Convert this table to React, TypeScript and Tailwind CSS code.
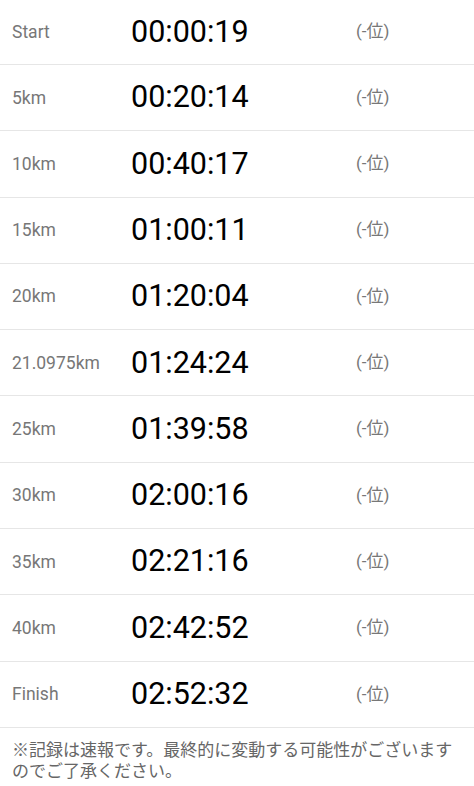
import React from 'react';

const splits = [
  { label: 'Start', time: '00:00:19' },
  { label: '5km', time: '00:20:14' },
  { label: '10km', time: '00:40:17' },
  { label: '15km', time: '01:00:11' },
  { label: '20km', time: '01:20:04' },
  { label: '21.0975km', time: '01:24:24' },
  { label: '25km', time: '01:39:58' },
  { label: '30km', time: '02:00:16' },
  { label: '35km', time: '02:21:16' },
  { label: '40km', time: '02:42:52' },
  { label: 'Finish', time: '02:52:32' },
];

export default function App() {
  return (
    <div className="w-[474px] h-[786px] bg-white overflow-hidden font-['Roboto','Noto_Sans_CJK_JP',sans-serif]">
      {splits.map((s, i) => (
        <div
          key={i}
          className={`flex items-center border-b border-[#e6e6e6] ${i === 0 ? 'h-[65px]' : 'h-[66.3px]'}`}
        >
          <span className="w-[131px] pl-3 text-[17.5px] text-[#777777] shrink-0">{s.label}</span>
          <span className="w-[225px] text-[30.5px] text-black leading-none shrink-0">{s.time}</span>
          <span className="text-[17px] text-[#777777]">(-位)</span>
        </div>
      ))}
      <p className="px-3 pt-[12px] text-[17px] leading-[21px] text-[#666666]">
        ※記録は速報です。最終的に変動する可能性がございますのでご了承ください。
      </p>
    </div>
  );
}
